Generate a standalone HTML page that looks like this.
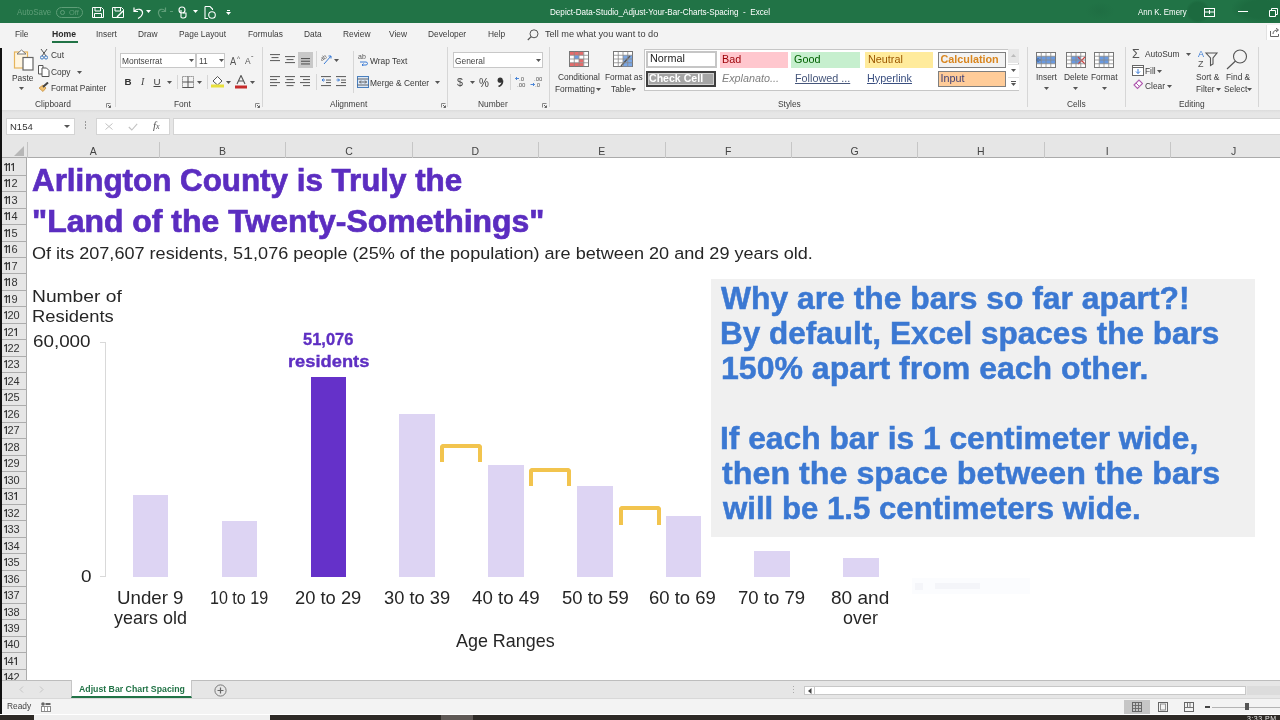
<!DOCTYPE html>
<html><head><meta charset="utf-8">
<style>
*{box-sizing:border-box;margin:0;padding:0}
html,body{width:1280px;height:720px;overflow:hidden;background:#fff;font-family:"Liberation Sans",sans-serif;}
.a{position:absolute;white-space:nowrap}
#titlebar{left:0;top:0;width:1280px;height:23px;background:#217346}
#tabs{left:0;top:23px;width:1280px;height:25px;background:#f3f3f3}
#ribbon{left:0;top:48px;width:1280px;height:62px;background:#f3f3f3}
#rshadow{left:0;top:110px;width:1280px;height:3px;background:linear-gradient(#dcdcdc,#e6e6e6)}
#fbar{left:0;top:113px;width:1280px;height:29px;background:#e6e6e6}
#colhdr{left:0;top:142px;width:1280px;height:16px;background:#e6e6e6;border-bottom:1px solid #ababab}
#rowhdr{left:0;top:158px;width:27px;height:522px;background:#e6e6e6;border-right:1px solid #ababab}
#tabbar{left:0;top:680px;width:1280px;height:19px;background:#e6e6e6;border-top:1px solid #bdbdbd;border-bottom:1px solid #d8d8d8}
#status{left:0;top:699px;width:1280px;height:15.4px;background:#f3f3f3}
#taskbar{left:0;top:714.6px;width:1280px;height:6px;background:#2e2a26}
#ledge{left:0;top:48px;width:2px;height:666px;background:#111}
.tx{color:#262626}
.t{line-height:1;transform-origin:0 0}
.co{font-size:31px;font-weight:bold;color:#3b78d2;-webkit-text-stroke:0.5px #3b78d2}
.bar{position:absolute;background:#ddd4f3}
.brk{position:absolute;border:4px solid #f2c44e;border-bottom:none;border-radius:4px 4px 0 0}
.ui{font-family:"Liberation Sans",sans-serif;white-space:nowrap}
.box{background:#fff;border:1px solid #d4d4d4}
.tri{width:0;height:0;border-left:3.5px solid transparent;border-right:3.5px solid transparent;border-top:3.5px solid #555}
.rl{position:absolute;left:2px;width:25px;height:1px;background:#adadad}
.rn{position:absolute;left:3.6px;font-size:11px;line-height:12px;color:#333;font-family:"Liberation Sans",sans-serif}
.o1{display:inline-block;vertical-align:baseline;margin-right:0.3px}
.cn{position:absolute;top:144.5px;width:40px;text-align:center;font-size:10.5px;line-height:12px;color:#444;font-family:"Liberation Sans",sans-serif}
.cs{position:absolute;top:142px;width:1px;height:16px;background:#c6c6c6}
#root{position:absolute;left:0;top:0;width:1280px;height:720px;will-change:transform}
</style></head><body><div id="root">
<div class="a" id="titlebar"></div>
<div class="a" id="tabs"></div>
<div class="a" id="ribbon"></div>
<div class="a" id="rshadow"></div>
<div class="a" id="fbar"></div>
<div class="a" id="colhdr"></div>
<div class="a" id="rowhdr"></div>
<div class="a" id="tabbar"></div>
<div class="a" id="status"></div>
<div class="a" id="taskbar"></div>
<div class="a" style="left:34px;top:714.6px;width:236px;height:6px;background:#efefef"></div>
<div class="a" style="left:440.6px;top:714.6px;width:32.5px;height:6px;background:#5e5855"></div>
<div class="a" id="ledge"></div>
<!--RIBBON-->
<div class="a" style="left:1186.00px;top:0.00px;width:24.00px;height:23.00px;background:radial-gradient(ellipse at center,#1c6a3f 0%,#1c6a3f 55%,rgba(33,115,70,0) 72%)"></div>
<div class="a" style="left:1232.00px;top:0.00px;width:50.00px;height:23.00px;background:radial-gradient(ellipse at 60% 40%,#1d6b40 0%,#1d6b40 45%,rgba(33,115,70,0) 75%)"></div>
<div class="a" style="left:1085.00px;top:2.00px;width:30.00px;height:18.00px;background:radial-gradient(ellipse at center,#1f6e43 0%,rgba(33,115,70,0) 70%)"></div>
<div class="a ui" style="left:16.50px;top:7.81px;font-size:9.20px;line-height:1;color:#5f9e78;transform:scaleX(0.860);transform-origin:0 0;">AutoSave</div>
<div class="a" style="left:56.00px;top:6.50px;width:27.00px;height:11.00px;border:1px solid #5f9e78;border-radius:6px"></div>
<div class="a" style="left:60.00px;top:9.50px;width:5.00px;height:5.00px;border:1px solid #5f9e78;border-radius:50%"></div>
<div class="a ui" style="left:68.50px;top:8.73px;font-size:8.00px;line-height:1;color:#5f9e78;transform:scaleX(0.930);transform-origin:0 0;">Off</div>
<svg class="a" style="left:92.00px;top:7.00px" width="12.00" height="11.00" viewBox="0 0 12.00 11.00"><path d="M0.5 0.5 H9.5 L11.5 2.5 V10.5 H0.5 Z M3 0.5 V4 H8.5 V0.5 M2.5 10.5 V6.5 H9.5 V10.5" stroke="#fff" fill="none" stroke-width="1"/></svg>
<svg class="a" style="left:112.00px;top:7.00px" width="12.00" height="11.00" viewBox="0 0 12.00 11.00"><path d="M0.5 0.5 H9.5 L11.5 2.5 V10.5 H0.5 Z M3 0.5 V4 H8.5 V0.5" stroke="#fff" fill="none" stroke-width="1"/><path d="M5 10 L11 4" stroke="#fff" stroke-width="1.5"/></svg>
<svg class="a" style="left:132.00px;top:6.00px" width="12.00" height="13.00" viewBox="0 0 12.00 13.00"><path d="M2 1.5 V5.5 H6 M2.5 5 C5 2 11 3 10.5 7.5 C10 10 8 11.5 6 12.5" stroke="#fff" fill="none" stroke-width="1.2"/></svg>
<svg class="a" style="left:145.50px;top:10.00px" width="5.00" height="3.00" viewBox="0 0 5.00 3.00"><path d="M0 0 H5 L2.5 3 Z" fill="#fff"/></svg>
<svg class="a" style="left:157.00px;top:6.00px" width="10.00" height="12.00" viewBox="0 0 10.00 12.00"><path d="M8.5 1.5 V5.5 H4.5 M8 5 C6 2 1 3 1.5 7.5 C2 10 3 11 4.5 12" stroke="#5f9e78" fill="none" stroke-width="1.2"/></svg>
<div class="a" style="left:170.00px;top:10.50px;width:3.00px;height:1.00px;background:#5f9e78"></div>
<svg class="a" style="left:178.00px;top:6.00px" width="9.00" height="13.00" viewBox="0 0 9.00 13.00"><circle cx="4" cy="4" r="3" stroke="#fff" fill="none" stroke-width="1.1"/><path d="M3 4 V11 C3 12.5 8 12.5 8 10 V7 H5" stroke="#fff" fill="none" stroke-width="1.1"/></svg>
<svg class="a" style="left:192.50px;top:10.00px" width="5.00" height="3.00" viewBox="0 0 5.00 3.00"><path d="M0 0 H5 L2.5 3 Z" fill="#fff"/></svg>
<svg class="a" style="left:204.00px;top:6.00px" width="12.00" height="13.00" viewBox="0 0 12.00 13.00"><path d="M1 0.5 H6 L8.5 3 V4 M1 0.5 V12.5 H4" stroke="#fff" fill="none" stroke-width="1.1"/><circle cx="8" cy="9" r="3.3" stroke="#fff" fill="none" stroke-width="1.1"/></svg>
<div class="a" style="left:226.50px;top:9.50px;width:3.00px;height:1.00px;background:#fff"></div>
<svg class="a" style="left:225.50px;top:11.50px" width="5.00" height="3.00" viewBox="0 0 5.00 3.00"><path d="M0 0 H5 L2.5 3 Z" fill="#fff"/></svg>
<div class="a ui" style="left:549.80px;top:7.14px;font-size:9.40px;line-height:1;color:#ffffff;transform:scaleX(0.865);transform-origin:0 0;">Depict-Data-Studio_Adjust-Your-Bar-Charts-Spacing&nbsp; - &nbsp;Excel</div>
<div class="a ui" style="left:1137.50px;top:7.14px;font-size:9.40px;line-height:1;color:#ffffff;transform:scaleX(0.840);transform-origin:0 0;">Ann K. Emery</div>
<svg class="a" style="left:1204.00px;top:7.50px" width="11.00" height="9.00" viewBox="0 0 11.00 9.00"><rect x="0.5" y="0.5" width="10" height="8" stroke="#fff" fill="none" stroke-width="1"/><path d="M0.5 4 H10.5 M5.5 2 V6" stroke="#fff" stroke-width="1"/></svg>
<div class="a" style="left:1238.00px;top:11.00px;width:10.00px;height:1.00px;background:#fff"></div>
<svg class="a" style="left:1269.00px;top:7.50px" width="9.00" height="9.00" viewBox="0 0 9.00 9.00"><path d="M0.5 2.5 H6.5 V8.5 H0.5 Z M2.5 2.5 V0.5 H8.5 V6.5 H6.5" stroke="#fff" fill="none" stroke-width="1"/></svg>
<div class="a ui" style="left:14.50px;top:30.21px;font-size:9.20px;line-height:1;color:#3a3a3a;transform:scaleX(0.910);transform-origin:0 0;">File</div>
<div class="a ui" style="left:96.00px;top:30.21px;font-size:9.20px;line-height:1;color:#3a3a3a;transform:scaleX(0.910);transform-origin:0 0;">Insert</div>
<div class="a ui" style="left:138.00px;top:30.21px;font-size:9.20px;line-height:1;color:#3a3a3a;transform:scaleX(0.910);transform-origin:0 0;">Draw</div>
<div class="a ui" style="left:179.25px;top:30.21px;font-size:9.20px;line-height:1;color:#3a3a3a;transform:scaleX(0.910);transform-origin:0 0;">Page Layout</div>
<div class="a ui" style="left:248.25px;top:30.21px;font-size:9.20px;line-height:1;color:#3a3a3a;transform:scaleX(0.910);transform-origin:0 0;">Formulas</div>
<div class="a ui" style="left:304.30px;top:30.21px;font-size:9.20px;line-height:1;color:#3a3a3a;transform:scaleX(0.910);transform-origin:0 0;">Data</div>
<div class="a ui" style="left:342.90px;top:30.21px;font-size:9.20px;line-height:1;color:#3a3a3a;transform:scaleX(0.910);transform-origin:0 0;">Review</div>
<div class="a ui" style="left:389.00px;top:30.21px;font-size:9.20px;line-height:1;color:#3a3a3a;transform:scaleX(0.910);transform-origin:0 0;">View</div>
<div class="a ui" style="left:427.50px;top:30.21px;font-size:9.20px;line-height:1;color:#3a3a3a;transform:scaleX(0.910);transform-origin:0 0;">Developer</div>
<div class="a ui" style="left:487.50px;top:30.21px;font-size:9.20px;line-height:1;color:#3a3a3a;transform:scaleX(0.910);transform-origin:0 0;">Help</div>
<div class="a ui" style="left:51.50px;top:30.21px;font-size:9.20px;line-height:1;color:#2a2a2a;transform:scaleX(0.940);transform-origin:0 0;font-weight:bold">Home</div>
<div class="a" style="left:52.00px;top:40.50px;width:26.00px;height:2.00px;background:#217346"></div>
<svg class="a" style="left:527.00px;top:29.00px" width="12.00" height="12.00" viewBox="0 0 12.00 12.00"><circle cx="7" cy="4.8" r="4" stroke="#555" fill="none" stroke-width="1"/><path d="M4.2 7.6 L0.8 11" stroke="#555" stroke-width="1.2"/></svg>
<div class="a ui" style="left:544.90px;top:30.21px;font-size:9.20px;line-height:1;color:#3a3a3a;">Tell me what you want to do</div>
<div class="a" style="left:1266.00px;top:25.00px;width:16.00px;height:15.00px;background:#fff;border-left:1px solid #e2e2e2"></div>
<svg class="a" style="left:1270.00px;top:28.00px" width="10.00" height="9.00" viewBox="0 0 10.00 9.00"><path d="M0.5 3 V8.5 H8.5 V6 M3 6 C3 3 5 2 8 2 M6 0 L8.5 2 L6 4" stroke="#666" fill="none" stroke-width="1"/></svg>
<svg class="a" style="left:13.00px;top:49.00px" width="21.00" height="22.00" viewBox="0 0 21.00 22.00"><rect x="1.5" y="3" width="13" height="16" fill="#fff5e0" stroke="#e6b45a" stroke-width="1.2"/><path d="M4 5 L8.5 1 L13 5 Z" fill="#fff" stroke="#777" stroke-width="1"/><rect x="10" y="8.5" width="10" height="12.5" fill="#fff" stroke="#666" stroke-width="1.2"/></svg>
<div class="a ui" style="left:11.50px;top:73.78px;font-size:9.00px;line-height:1;color:#383838;transform:scaleX(0.930);transform-origin:0 0;">Paste</div>
<svg class="a" style="left:19.00px;top:87.00px" width="5.00" height="3.00" viewBox="0 0 5.00 3.00"><path d="M0 0 H5 L2.5 3 Z" fill="#555"/></svg>
<svg class="a" style="left:40.00px;top:49.00px" width="8.00" height="11.00" viewBox="0 0 8.00 11.00"><path d="M1 0 L6 7 M7 0 L2 7" stroke="#555" stroke-width="1"/><circle cx="2" cy="8.5" r="1.6" stroke="#3c78c0" fill="none"/><circle cx="6" cy="8.5" r="1.6" stroke="#3c78c0" fill="none"/></svg>
<div class="a ui" style="left:50.50px;top:51.08px;font-size:9.00px;line-height:1;color:#383838;transform:scaleX(0.930);transform-origin:0 0;">Cut</div>
<svg class="a" style="left:37.50px;top:64.50px" width="12.00" height="12.00" viewBox="0 0 12.00 12.00"><path d="M0.5 0.5 H5 V9 H0.5 Z" stroke="#555" fill="#fff" stroke-width="1"/><path d="M4 3 H8.5 L11 5.5 V11.5 H4 Z" stroke="#555" fill="#fff" stroke-width="1"/></svg>
<div class="a ui" style="left:50.50px;top:67.58px;font-size:9.00px;line-height:1;color:#383838;transform:scaleX(0.930);transform-origin:0 0;">Copy</div>
<svg class="a" style="left:77.00px;top:70.50px" width="5.00" height="3.00" viewBox="0 0 5.00 3.00"><path d="M0 0 H5 L2.5 3 Z" fill="#555"/></svg>
<svg class="a" style="left:38.00px;top:82.00px" width="11.00" height="10.00" viewBox="0 0 11.00 10.00"><path d="M1 6 L5 3 L8 6 L5 9.5 Z" fill="#f0c070" stroke="#c89040" stroke-width="0.8"/><path d="M5 5 L10 0.5" stroke="#444" stroke-width="2"/></svg>
<div class="a ui" style="left:50.50px;top:83.68px;font-size:9.00px;line-height:1;color:#383838;transform:scaleX(0.930);transform-origin:0 0;">Format Painter</div>
<div class="a ui" style="left:34.50px;top:100.38px;font-size:9.00px;line-height:1;color:#3c3c3c;transform:scaleX(0.930);transform-origin:0 0;">Clipboard</div>
<svg class="a" style="left:106.00px;top:102.50px" width="5.00" height="5.00" viewBox="0 0 5.00 5.00"><path d="M0.5 4.5 V0.5 H4.5" stroke="#888" fill="none" stroke-width="1"/><path d="M2 2 L4.5 4.5 M4.5 2.5 V4.5 H2.5" stroke="#666" fill="none" stroke-width="1"/></svg>
<div class="a" style="left:114.50px;top:46.50px;width:1.00px;height:60.00px;background:#d6d6d6"></div>
<div class="a" style="left:120.25px;top:52.50px;width:76.00px;height:15.00px;background:#fff;border:1px solid #c8c8c8"></div>
<div class="a" style="left:196.00px;top:52.50px;width:29.40px;height:15.00px;background:#fff;border:1px solid #c8c8c8"></div>
<div class="a ui" style="left:122.00px;top:56.68px;font-size:9.00px;line-height:1;color:#444;transform:scaleX(0.930);transform-origin:0 0;">Montserrat</div>
<svg class="a" style="left:188.50px;top:59.00px" width="5.00" height="3.00" viewBox="0 0 5.00 3.00"><path d="M0 0 H5 L2.5 3 Z" fill="#555"/></svg>
<div class="a ui" style="left:198.50px;top:56.68px;font-size:9.00px;line-height:1;color:#444;transform:scaleX(0.930);transform-origin:0 0;">11</div>
<svg class="a" style="left:218.50px;top:59.00px" width="5.00" height="3.00" viewBox="0 0 5.00 3.00"><path d="M0 0 H5 L2.5 3 Z" fill="#555"/></svg>
<div class="a ui" style="left:229.50px;top:56.53px;font-size:10.00px;line-height:1;color:#555;transform:scaleX(0.930);transform-origin:0 0;">A</div>
<div class="a ui" style="left:236.50px;top:55.07px;font-size:7.00px;line-height:1;color:#555;transform:scaleX(0.930);transform-origin:0 0;">^</div>
<div class="a ui" style="left:244.50px;top:57.38px;font-size:9.00px;line-height:1;color:#555;transform:scaleX(0.930);transform-origin:0 0;">A</div>
<div class="a ui" style="left:251.00px;top:55.23px;font-size:8.00px;line-height:1;color:#555;transform:scaleX(0.930);transform-origin:0 0;">&#711;</div>
<div class="a ui" style="left:124.50px;top:77.00px;font-size:9.80px;line-height:1;color:#333;font-weight:bold">B</div>
<div class="a ui" style="left:141.00px;top:76.83px;font-size:10.00px;line-height:1;color:#444;font-family:'Liberation Serif',serif;font-style:italic">I</div>
<div class="a ui" style="left:153.50px;top:77.00px;font-size:9.80px;line-height:1;color:#444;text-decoration:underline">U</div>
<svg class="a" style="left:166.50px;top:81.00px" width="5.00" height="3.00" viewBox="0 0 5.00 3.00"><path d="M0 0 H5 L2.5 3 Z" fill="#555"/></svg>
<div class="a" style="left:177.00px;top:75.00px;width:1.00px;height:14.00px;background:#d6d6d6"></div>
<svg class="a" style="left:182.00px;top:76.00px" width="12.00" height="12.00" viewBox="0 0 12.00 12.00"><rect x="0.5" y="0.5" width="11" height="11" stroke="#777" fill="none" stroke-width="1" stroke-dasharray="1.2 0.8"/><path d="M6 0.5 V11.5 M0.5 6 H11.5 M0.5 11.5 H11.5" stroke="#555" stroke-width="1"/></svg>
<svg class="a" style="left:196.50px;top:81.00px" width="5.00" height="3.00" viewBox="0 0 5.00 3.00"><path d="M0 0 H5 L2.5 3 Z" fill="#555"/></svg>
<div class="a" style="left:206.50px;top:75.00px;width:1.00px;height:14.00px;background:#d6d6d6"></div>
<svg class="a" style="left:211.00px;top:75.00px" width="13.00" height="13.00" viewBox="0 0 13.00 13.00"><path d="M2 6 L6.5 1.5 L11 6 L6.5 10 Z" stroke="#555" fill="#fff" stroke-width="1"/><rect x="0" y="9.5" width="13" height="3" fill="#e8e03c"/></svg>
<svg class="a" style="left:226.00px;top:81.00px" width="5.00" height="3.00" viewBox="0 0 5.00 3.00"><path d="M0 0 H5 L2.5 3 Z" fill="#555"/></svg>
<svg class="a" style="left:235.00px;top:75.00px" width="12.00" height="14.00" viewBox="0 0 12.00 14.00"><path d="M2 9 L6 0.5 L10 9 M3.5 6 H8.5" stroke="#555" fill="none" stroke-width="1.1"/><rect x="0" y="10.5" width="12" height="3" fill="#c62b2b"/></svg>
<svg class="a" style="left:249.50px;top:81.00px" width="5.00" height="3.00" viewBox="0 0 5.00 3.00"><path d="M0 0 H5 L2.5 3 Z" fill="#555"/></svg>
<div class="a ui" style="left:173.50px;top:100.38px;font-size:9.00px;line-height:1;color:#3c3c3c;transform:scaleX(0.930);transform-origin:0 0;">Font</div>
<svg class="a" style="left:255.00px;top:102.50px" width="5.00" height="5.00" viewBox="0 0 5.00 5.00"><path d="M0.5 4.5 V0.5 H4.5" stroke="#888" fill="none" stroke-width="1"/><path d="M2 2 L4.5 4.5 M4.5 2.5 V4.5 H2.5" stroke="#666" fill="none" stroke-width="1"/></svg>
<div class="a" style="left:261.80px;top:46.50px;width:1.00px;height:60.00px;background:#d6d6d6"></div>
<svg class="a" style="left:270.00px;top:54.00px" width="12.00" height="10.00" viewBox="0 0 12.00 10.00"><rect x="0.0" y="0.0" width="10.0" height="1.1" fill="#666"/><rect x="1.5" y="3.0" width="7.0" height="1.1" fill="#666"/><rect x="0.0" y="6.0" width="10.0" height="1.1" fill="#666"/></svg>
<svg class="a" style="left:285.00px;top:56.00px" width="12.00" height="10.00" viewBox="0 0 12.00 10.00"><rect x="0.0" y="0.0" width="10.0" height="1.1" fill="#666"/><rect x="1.5" y="3.0" width="7.0" height="1.1" fill="#666"/><rect x="0.0" y="6.0" width="10.0" height="1.1" fill="#666"/></svg>
<div class="a" style="left:297.60px;top:52.00px;width:15.00px;height:16.00px;background:#c8c8c8"></div>
<svg class="a" style="left:301.00px;top:58.00px" width="12.00" height="9.10" viewBox="0 0 12.00 9.10"><rect x="0.0" y="0.0" width="9.0" height="1.1" fill="#555"/><rect x="0.0" y="2.7" width="9.0" height="1.1" fill="#555"/><rect x="0.0" y="5.4" width="9.0" height="1.1" fill="#555"/></svg>
<div class="a" style="left:315.50px;top:51.00px;width:1.00px;height:16.00px;background:#d6d6d6"></div>
<svg class="a" style="left:321.00px;top:53.00px" width="12.00" height="12.00" viewBox="0 0 12.00 12.00"><text x="0" y="6" font-size="6" fill="#555" font-family="Liberation Sans" transform="rotate(-35 4 6)">ab</text><path d="M3 11 L10 3 M7.5 3 H10 V5.5" stroke="#3a7bd5" fill="none" stroke-width="1"/></svg>
<svg class="a" style="left:333.50px;top:59.00px" width="5.00" height="3.00" viewBox="0 0 5.00 3.00"><path d="M0 0 H5 L2.5 3 Z" fill="#555"/></svg>
<svg class="a" style="left:270.00px;top:76.00px" width="12.00" height="13.00" viewBox="0 0 12.00 13.00"><rect x="0.0" y="0.0" width="10.0" height="1.1" fill="#666"/><rect x="0.0" y="3.0" width="7.0" height="1.1" fill="#666"/><rect x="0.0" y="6.0" width="10.0" height="1.1" fill="#666"/><rect x="0.0" y="9.0" width="7.0" height="1.1" fill="#666"/></svg>
<svg class="a" style="left:285.00px;top:76.00px" width="12.00" height="13.00" viewBox="0 0 12.00 13.00"><rect x="0.0" y="0.0" width="10.0" height="1.1" fill="#666"/><rect x="1.5" y="3.0" width="7.0" height="1.1" fill="#666"/><rect x="0.0" y="6.0" width="10.0" height="1.1" fill="#666"/><rect x="1.5" y="9.0" width="7.0" height="1.1" fill="#666"/></svg>
<svg class="a" style="left:300.00px;top:76.00px" width="12.00" height="13.00" viewBox="0 0 12.00 13.00"><rect x="0.0" y="0.0" width="10.0" height="1.1" fill="#666"/><rect x="3.0" y="3.0" width="7.0" height="1.1" fill="#666"/><rect x="0.0" y="6.0" width="10.0" height="1.1" fill="#666"/><rect x="3.0" y="9.0" width="7.0" height="1.1" fill="#666"/></svg>
<div class="a" style="left:315.50px;top:74.00px;width:1.00px;height:16.00px;background:#d6d6d6"></div>
<svg class="a" style="left:321.00px;top:76.00px" width="11.00" height="11.00" viewBox="0 0 11.00 11.00"><rect x="0" y="0" width="10" height="1.1" fill="#666"/><rect x="5" y="3.5" width="5" height="1.1" fill="#666"/><rect x="0" y="9" width="10" height="1.1" fill="#666"/><path d="M4 4 L1 4 M2.5 2.5 L1 4 L2.5 5.5" stroke="#3a7bd5" fill="none" stroke-width="1"/><rect x="5" y="6" width="5" height="1.1" fill="#666"/></svg>
<svg class="a" style="left:336.00px;top:76.00px" width="11.00" height="11.00" viewBox="0 0 11.00 11.00"><rect x="0" y="0" width="10" height="1.1" fill="#666"/><rect x="5" y="3.5" width="5" height="1.1" fill="#666"/><rect x="0" y="9" width="10" height="1.1" fill="#666"/><path d="M0.5 4 L3.5 4 M2 2.5 L3.5 4 L2 5.5" stroke="#3a7bd5" fill="none" stroke-width="1"/><rect x="5" y="6" width="5" height="1.1" fill="#666"/></svg>
<div class="a" style="left:352.70px;top:51.00px;width:1.00px;height:42.00px;background:#d6d6d6"></div>
<svg class="a" style="left:358.00px;top:53.00px" width="11.00" height="13.00" viewBox="0 0 11.00 13.00"><text x="0" y="6" font-size="7" fill="#555" font-family="Liberation Sans">ab</text><path d="M2 9 H8 C10 9 10 12 8 12 H4 M5.5 10.5 L4 12 L5.5 13" stroke="#3a7bd5" fill="none" stroke-width="1"/></svg>
<div class="a ui" style="left:370.00px;top:56.88px;font-size:9.00px;line-height:1;color:#383838;transform:scaleX(0.930);transform-origin:0 0;">Wrap Text</div>
<svg class="a" style="left:357.00px;top:75.50px" width="12.00" height="12.00" viewBox="0 0 12.00 12.00"><rect x="0.5" y="0.5" width="11" height="11" stroke="#4a7fbd" fill="#dbe8f7" stroke-width="1"/><path d="M2.5 6 H9.5 M4 4.5 L2.5 6 L4 7.5 M8 4.5 L9.5 6 L8 7.5 M0.5 3 H11.5 M0.5 9 H11.5" stroke="#555" fill="none" stroke-width="0.9"/></svg>
<div class="a ui" style="left:370.10px;top:78.88px;font-size:9.00px;line-height:1;color:#383838;transform:scaleX(0.930);transform-origin:0 0;">Merge &amp; Center</div>
<svg class="a" style="left:434.50px;top:81.00px" width="5.00" height="3.00" viewBox="0 0 5.00 3.00"><path d="M0 0 H5 L2.5 3 Z" fill="#555"/></svg>
<div class="a ui" style="left:330.00px;top:100.38px;font-size:9.00px;line-height:1;color:#3c3c3c;transform:scaleX(0.930);transform-origin:0 0;">Alignment</div>
<svg class="a" style="left:440.50px;top:102.50px" width="5.00" height="5.00" viewBox="0 0 5.00 5.00"><path d="M0.5 4.5 V0.5 H4.5" stroke="#888" fill="none" stroke-width="1"/><path d="M2 2 L4.5 4.5 M4.5 2.5 V4.5 H2.5" stroke="#666" fill="none" stroke-width="1"/></svg>
<div class="a" style="left:447.20px;top:46.50px;width:1.00px;height:60.00px;background:#d6d6d6"></div>
<div class="a" style="left:453.30px;top:52.10px;width:89.70px;height:15.60px;background:#fff;border:1px solid #c8c8c8"></div>
<div class="a ui" style="left:455.10px;top:56.68px;font-size:9.00px;line-height:1;color:#444;transform:scaleX(0.930);transform-origin:0 0;">General</div>
<svg class="a" style="left:535.50px;top:59.00px" width="5.00" height="3.00" viewBox="0 0 5.00 3.00"><path d="M0 0 H5 L2.5 3 Z" fill="#555"/></svg>
<div class="a ui" style="left:456.50px;top:77.27px;font-size:11.50px;line-height:1;color:#444;transform:scaleX(0.930);transform-origin:0 0;">$</div>
<svg class="a" style="left:469.50px;top:81.00px" width="5.00" height="3.00" viewBox="0 0 5.00 3.00"><path d="M0 0 H5 L2.5 3 Z" fill="#555"/></svg>
<div class="a ui" style="left:478.50px;top:76.84px;font-size:12.00px;line-height:1;color:#444;transform:scaleX(0.930);transform-origin:0 0;">%</div>
<svg class="a" style="left:496.50px;top:77.00px" width="7.00" height="10.00" viewBox="0 0 7.00 10.00"><circle cx="3.2" cy="3.2" r="2.6" fill="#333"/><path d="M5.6 3.5 C5.6 6.5 4 8.5 1.5 9.5" stroke="#333" stroke-width="1.6" fill="none"/></svg>
<div class="a" style="left:510.00px;top:74.00px;width:1.00px;height:16.00px;background:#d6d6d6"></div>
<svg class="a" style="left:515.00px;top:75.00px" width="12.00" height="12.00" viewBox="0 0 12.00 12.00"><text x="4" y="5.5" font-size="6" fill="#555" font-family="Liberation Sans">.0</text><text x="2" y="11.5" font-size="6" fill="#555" font-family="Liberation Sans">.00</text><path d="M0.5 3.5 H4 M2 2 L0.5 3.5 L2 5" stroke="#3a7bd5" fill="none" stroke-width="0.9"/></svg>
<svg class="a" style="left:530.00px;top:75.00px" width="12.00" height="12.00" viewBox="0 0 12.00 12.00"><text x="4" y="5.5" font-size="6" fill="#555" font-family="Liberation Sans">.00</text><text x="5" y="11.5" font-size="6" fill="#555" font-family="Liberation Sans">.0</text><path d="M0.5 9.5 H4.5 M3 8 L4.5 9.5 L3 11" stroke="#3a7bd5" fill="none" stroke-width="0.9"/></svg>
<div class="a ui" style="left:477.50px;top:100.38px;font-size:9.00px;line-height:1;color:#3c3c3c;transform:scaleX(0.930);transform-origin:0 0;">Number</div>
<svg class="a" style="left:541.50px;top:102.50px" width="5.00" height="5.00" viewBox="0 0 5.00 5.00"><path d="M0.5 4.5 V0.5 H4.5" stroke="#888" fill="none" stroke-width="1"/><path d="M2 2 L4.5 4.5 M4.5 2.5 V4.5 H2.5" stroke="#666" fill="none" stroke-width="1"/></svg>
<div class="a" style="left:548.60px;top:46.50px;width:1.00px;height:60.00px;background:#d6d6d6"></div>
<svg class="a" style="left:569.00px;top:51.00px" width="20.00" height="16.00" viewBox="0 0 20.00 16.00"><rect x="0.5" y="0.5" width="19" height="15" fill="#fff" stroke="#777" stroke-width="1"/><rect x="1" y="1" width="13.5" height="3.2" fill="#e46c6c"/><rect x="5.3" y="4.3" width="4.6" height="3.6" fill="#6a9ae0"/><rect x="10" y="8" width="4.6" height="3.6" fill="#e46c6c"/><rect x="1" y="11.8" width="13.5" height="3.2" fill="#e46c6c"/><path d="M5.25 0.5 V15.5" stroke="#888" stroke-width="0.8"/><path d="M10.00 0.5 V15.5" stroke="#888" stroke-width="0.8"/><path d="M14.75 0.5 V15.5" stroke="#888" stroke-width="0.8"/><path d="M0.5 4.25 H19.5" stroke="#888" stroke-width="0.8"/><path d="M0.5 8.00 H19.5" stroke="#888" stroke-width="0.8"/><path d="M0.5 11.75 H19.5" stroke="#888" stroke-width="0.8"/></svg>
<div class="a ui" style="left:557.50px;top:73.38px;font-size:9.00px;line-height:1;color:#383838;transform:scaleX(0.930);transform-origin:0 0;">Conditional</div>
<div class="a ui" style="left:555.00px;top:84.68px;font-size:9.00px;line-height:1;color:#383838;transform:scaleX(0.930);transform-origin:0 0;">Formatting</div>
<svg class="a" style="left:596.00px;top:88.00px" width="5.00" height="3.00" viewBox="0 0 5.00 3.00"><path d="M0 0 H5 L2.5 3 Z" fill="#555"/></svg>
<svg class="a" style="left:613.00px;top:51.00px" width="20.00" height="16.00" viewBox="0 0 20.00 16.00"><rect x="0.5" y="0.5" width="19" height="15" fill="#fff" stroke="#777" stroke-width="1"/><rect x="10" y="4.3" width="9" height="11" fill="#7aa7e6"/><path d="M8 15 L17 5" stroke="#555" stroke-width="1.5"/><path d="M5.25 0.5 V15.5" stroke="#888" stroke-width="0.8"/><path d="M10.00 0.5 V15.5" stroke="#888" stroke-width="0.8"/><path d="M14.75 0.5 V15.5" stroke="#888" stroke-width="0.8"/><path d="M0.5 4.25 H19.5" stroke="#888" stroke-width="0.8"/><path d="M0.5 8.00 H19.5" stroke="#888" stroke-width="0.8"/><path d="M0.5 11.75 H19.5" stroke="#888" stroke-width="0.8"/></svg>
<div class="a ui" style="left:604.50px;top:73.38px;font-size:9.00px;line-height:1;color:#383838;transform:scaleX(0.930);transform-origin:0 0;">Format as</div>
<div class="a ui" style="left:610.50px;top:84.68px;font-size:9.00px;line-height:1;color:#383838;transform:scaleX(0.930);transform-origin:0 0;">Table</div>
<svg class="a" style="left:630.50px;top:88.00px" width="5.00" height="3.00" viewBox="0 0 5.00 3.00"><path d="M0 0 H5 L2.5 3 Z" fill="#555"/></svg>
<div class="a" style="left:643.75px;top:48.70px;width:375.00px;height:42.00px;background:#fff;border:1px solid #c6c6c6"></div>
<div class="a" style="left:645.50px;top:51.00px;width:71.00px;height:17.20px;background:#fff;border:2px solid #c6c6c6"></div>
<div class="a ui" style="left:650.00px;top:53.47px;font-size:10.8px;line-height:1;color:#222">Normal</div>
<div class="a" style="left:719.50px;top:51.50px;width:68.00px;height:16.50px;background:#ffc7ce"></div>
<div class="a ui" style="left:722.00px;top:53.62px;font-size:10.8px;line-height:1;color:#9c0006">Bad</div>
<div class="a" style="left:791.00px;top:51.50px;width:69.00px;height:16.50px;background:#c6efce"></div>
<div class="a ui" style="left:794.00px;top:53.62px;font-size:10.8px;line-height:1;color:#006100">Good</div>
<div class="a" style="left:865.00px;top:51.50px;width:68.00px;height:16.50px;background:#ffeb9c"></div>
<div class="a ui" style="left:868.00px;top:53.62px;font-size:10.8px;line-height:1;color:#9c5700">Neutral</div>
<div class="a" style="left:937.50px;top:51.50px;width:68.20px;height:16.50px;background:#f2f2f2;border:1px solid #7f7f7f"></div>
<div class="a ui" style="left:940.50px;top:53.62px;font-size:10.8px;line-height:1;color:#d9861f;font-weight:bold">Calculation</div>
<div class="a" style="left:645.50px;top:71.00px;width:70.00px;height:15.50px;background:#a5a5a5;border:2px solid #3f3f3f;box-shadow:inset 0 0 0 1px #d0d0d0"></div>
<div class="a ui" style="left:649.00px;top:72.62px;font-size:10.8px;line-height:1;color:#fff;font-weight:bold;transform:scaleX(0.98);transform-origin:0 0">Check Cell</div>
<div class="a" style="left:719.50px;top:71.00px;width:68.00px;height:15.50px;"></div>
<div class="a ui" style="left:722.00px;top:72.62px;font-size:10.8px;line-height:1;color:#7f7f7f;font-style:italic">Explanato...</div>
<div class="a" style="left:791.00px;top:71.00px;width:69.00px;height:15.50px;"></div>
<div class="a ui" style="left:795.00px;top:72.62px;font-size:10.8px;line-height:1;color:#45557a;text-decoration:underline">Followed ...</div>
<div class="a" style="left:865.00px;top:71.00px;width:68.00px;height:15.50px;"></div>
<div class="a ui" style="left:867.00px;top:72.62px;font-size:10.8px;line-height:1;color:#3a4f80;text-decoration:underline">Hyperlink</div>
<div class="a" style="left:937.50px;top:71.00px;width:68.20px;height:15.50px;background:#ffcc99;border:1px solid #7f7f7f"></div>
<div class="a ui" style="left:940.50px;top:72.62px;font-size:10.8px;line-height:1;color:#3f3f76">Input</div>
<div class="a" style="left:1008.00px;top:49.20px;width:10.50px;height:14.00px;background:#e6e6e6"></div>
<svg class="a" style="left:1011.00px;top:54.00px" width="5.00" height="3.00" viewBox="0 0 5.00 3.00"><path d="M0 3 H5 L2.5 0 Z" fill="#bbb"/></svg>
<div class="a" style="left:1008.00px;top:63.50px;width:10.50px;height:13.00px;background:#fff;border-top:1px solid #e0e0e0"></div>
<svg class="a" style="left:1010.70px;top:69.00px" width="5.00" height="3.00" viewBox="0 0 5.00 3.00"><path d="M0 0 H5 L2.5 3 Z" fill="#555"/></svg>
<div class="a" style="left:1008.00px;top:76.50px;width:10.50px;height:13.50px;background:#fff;border-top:1px solid #e0e0e0"></div>
<div class="a" style="left:1010.70px;top:81.00px;width:5.00px;height:1.00px;background:#555"></div>
<svg class="a" style="left:1010.70px;top:83.00px" width="5.00" height="3.00" viewBox="0 0 5.00 3.00"><path d="M0 0 H5 L2.5 3 Z" fill="#555"/></svg>
<div class="a ui" style="left:777.50px;top:100.38px;font-size:9.00px;line-height:1;color:#3c3c3c;transform:scaleX(0.930);transform-origin:0 0;">Styles</div>
<div class="a" style="left:1026.70px;top:46.50px;width:1.00px;height:60.00px;background:#d6d6d6"></div>
<svg class="a" style="left:1036.00px;top:51.50px" width="20.00" height="16.00" viewBox="0 0 20.00 16.00"><rect x="0.5" y="0.5" width="19" height="15" fill="#fff" stroke="#777" stroke-width="1"/><rect x="1" y="4.3" width="18" height="7.4" fill="#6a9ae0"/><path d="M5 8 H0.5 M2.5 6 L0.5 8 L2.5 10" stroke="#2a5aa0" fill="none" stroke-width="1"/><path d="M5.25 0.5 V15.5" stroke="#888" stroke-width="0.8"/><path d="M10.00 0.5 V15.5" stroke="#888" stroke-width="0.8"/><path d="M14.75 0.5 V15.5" stroke="#888" stroke-width="0.8"/><path d="M0.5 4.25 H19.5" stroke="#888" stroke-width="0.8"/><path d="M0.5 8.00 H19.5" stroke="#888" stroke-width="0.8"/><path d="M0.5 11.75 H19.5" stroke="#888" stroke-width="0.8"/></svg>
<div class="a ui" style="left:1035.50px;top:73.38px;font-size:9.00px;line-height:1;color:#383838;transform:scaleX(0.930);transform-origin:0 0;">Insert</div>
<svg class="a" style="left:1043.50px;top:87.00px" width="5.00" height="3.00" viewBox="0 0 5.00 3.00"><path d="M0 0 H5 L2.5 3 Z" fill="#555"/></svg>
<svg class="a" style="left:1065.50px;top:51.50px" width="20.00" height="16.00" viewBox="0 0 20.00 16.00"><rect x="0.5" y="0.5" width="19" height="15" fill="#fff" stroke="#777" stroke-width="1"/><rect x="5.3" y="4.3" width="9.4" height="7.4" fill="#6a9ae0"/><path d="M12 5 L19 12 M19 5 L12 12" stroke="#d04040" stroke-width="1.2"/><path d="M5.25 0.5 V15.5" stroke="#888" stroke-width="0.8"/><path d="M10.00 0.5 V15.5" stroke="#888" stroke-width="0.8"/><path d="M14.75 0.5 V15.5" stroke="#888" stroke-width="0.8"/><path d="M0.5 4.25 H19.5" stroke="#888" stroke-width="0.8"/><path d="M0.5 8.00 H19.5" stroke="#888" stroke-width="0.8"/><path d="M0.5 11.75 H19.5" stroke="#888" stroke-width="0.8"/></svg>
<div class="a ui" style="left:1063.50px;top:73.38px;font-size:9.00px;line-height:1;color:#383838;transform:scaleX(0.930);transform-origin:0 0;">Delete</div>
<svg class="a" style="left:1073.00px;top:87.00px" width="5.00" height="3.00" viewBox="0 0 5.00 3.00"><path d="M0 0 H5 L2.5 3 Z" fill="#555"/></svg>
<svg class="a" style="left:1094.00px;top:51.50px" width="20.00" height="16.00" viewBox="0 0 20.00 16.00"><rect x="0.5" y="0.5" width="19" height="15" fill="#fff" stroke="#777" stroke-width="1"/><rect x="5.3" y="4.3" width="9.4" height="7.4" fill="#6a9ae0"/><path d="M5 -0.5 H15" stroke="#2a5aa0" stroke-width="1"/><path d="M5.25 0.5 V15.5" stroke="#888" stroke-width="0.8"/><path d="M10.00 0.5 V15.5" stroke="#888" stroke-width="0.8"/><path d="M14.75 0.5 V15.5" stroke="#888" stroke-width="0.8"/><path d="M0.5 4.25 H19.5" stroke="#888" stroke-width="0.8"/><path d="M0.5 8.00 H19.5" stroke="#888" stroke-width="0.8"/><path d="M0.5 11.75 H19.5" stroke="#888" stroke-width="0.8"/></svg>
<div class="a ui" style="left:1091.00px;top:73.38px;font-size:9.00px;line-height:1;color:#383838;transform:scaleX(0.930);transform-origin:0 0;">Format</div>
<svg class="a" style="left:1101.50px;top:87.00px" width="5.00" height="3.00" viewBox="0 0 5.00 3.00"><path d="M0 0 H5 L2.5 3 Z" fill="#555"/></svg>
<div class="a ui" style="left:1066.50px;top:100.38px;font-size:9.00px;line-height:1;color:#3c3c3c;transform:scaleX(0.930);transform-origin:0 0;">Cells</div>
<div class="a" style="left:1124.60px;top:46.50px;width:1.00px;height:60.00px;background:#d6d6d6"></div>
<div class="a ui" style="left:1132.00px;top:48.42px;font-size:12.50px;line-height:1;color:#555;">&Sigma;</div>
<div class="a ui" style="left:1145.00px;top:49.88px;font-size:9.00px;line-height:1;color:#383838;transform:scaleX(0.930);transform-origin:0 0;">AutoSum</div>
<svg class="a" style="left:1185.50px;top:52.50px" width="5.00" height="3.00" viewBox="0 0 5.00 3.00"><path d="M0 0 H5 L2.5 3 Z" fill="#555"/></svg>
<svg class="a" style="left:1132.00px;top:64.50px" width="12.00" height="11.00" viewBox="0 0 12.00 11.00"><rect x="0.5" y="0.5" width="11" height="10" stroke="#666" fill="#fff" stroke-width="1"/><path d="M0.5 2.5 H11.5" stroke="#666"/><path d="M6 4 V8.5 M4 6.5 L6 8.5 L8 6.5" stroke="#3a7bd5" fill="none" stroke-width="1"/></svg>
<div class="a ui" style="left:1145.00px;top:66.58px;font-size:9.00px;line-height:1;color:#383838;transform:scaleX(0.930);transform-origin:0 0;">Fill</div>
<svg class="a" style="left:1156.50px;top:70.00px" width="5.00" height="3.00" viewBox="0 0 5.00 3.00"><path d="M0 0 H5 L2.5 3 Z" fill="#555"/></svg>
<svg class="a" style="left:1133.00px;top:79.00px" width="10.00" height="11.00" viewBox="0 0 10.00 11.00"><path d="M1 6 L6 1 L9.5 4.5 L4.5 9.5 Z" stroke="#b05ab0" fill="#fff" stroke-width="1.1"/><path d="M3 4 L6.5 7.5" stroke="#b05ab0" stroke-width="1"/></svg>
<div class="a ui" style="left:1145.00px;top:81.58px;font-size:9.00px;line-height:1;color:#383838;transform:scaleX(0.930);transform-origin:0 0;">Clear</div>
<svg class="a" style="left:1166.50px;top:84.50px" width="5.00" height="3.00" viewBox="0 0 5.00 3.00"><path d="M0 0 H5 L2.5 3 Z" fill="#555"/></svg>
<svg class="a" style="left:1197.00px;top:49.00px" width="22.00" height="19.00" viewBox="0 0 22.00 19.00"><text x="1" y="8" font-size="9" fill="#3a7bd5" font-family="Liberation Sans">A</text><text x="1" y="18" font-size="9" fill="#555" font-family="Liberation Sans">Z</text><path d="M9 4 H20 L16 9 V15 L13.5 16.5 V9 Z" stroke="#555" fill="none" stroke-width="1.1"/></svg>
<div class="a ui" style="left:1195.50px;top:73.38px;font-size:9.00px;line-height:1;color:#383838;transform:scaleX(0.930);transform-origin:0 0;">Sort &amp;</div>
<div class="a ui" style="left:1195.50px;top:84.68px;font-size:9.00px;line-height:1;color:#383838;transform:scaleX(0.930);transform-origin:0 0;">Filter</div>
<svg class="a" style="left:1216.00px;top:88.00px" width="5.00" height="3.00" viewBox="0 0 5.00 3.00"><path d="M0 0 H5 L2.5 3 Z" fill="#555"/></svg>
<svg class="a" style="left:1226.00px;top:49.00px" width="22.00" height="21.00" viewBox="0 0 22.00 21.00"><circle cx="14" cy="7.5" r="6.5" stroke="#555" fill="none" stroke-width="1.1"/><path d="M9.5 12 L1 20" stroke="#555" stroke-width="1.1"/></svg>
<div class="a ui" style="left:1225.50px;top:73.38px;font-size:9.00px;line-height:1;color:#383838;transform:scaleX(0.930);transform-origin:0 0;">Find &amp;</div>
<div class="a ui" style="left:1223.50px;top:84.68px;font-size:9.00px;line-height:1;color:#383838;transform:scaleX(0.930);transform-origin:0 0;">Select</div>
<svg class="a" style="left:1246.50px;top:88.00px" width="5.00" height="3.00" viewBox="0 0 5.00 3.00"><path d="M0 0 H5 L2.5 3 Z" fill="#555"/></svg>
<div class="a ui" style="left:1178.50px;top:100.38px;font-size:9.00px;line-height:1;color:#3c3c3c;transform:scaleX(0.930);transform-origin:0 0;">Editing</div>
<div class="a" style="left:1257.70px;top:46.50px;width:1.00px;height:60.00px;background:#d6d6d6"></div>
<!--/RIBBON-->
<!-- formula bar -->
<div class="a box" style="left:5.5px;top:117.5px;width:69px;height:17.5px"></div>
<div class="a ui" style="left:10px;top:121px;font-size:9.5px;color:#333">N154</div>
<div class="a tri" style="left:64px;top:124.5px"></div>
<div class="a" style="left:84.5px;top:121px;width:1px;height:1.5px;background:#999;box-shadow:0 3px 0 #999,0 6px 0 #999"></div>
<div class="a box" style="left:95.6px;top:117.5px;width:74.6px;height:17.5px"></div>
<div class="a box" style="left:173px;top:117.5px;width:1110px;height:17.5px"></div>
<svg class="a" style="left:104.5px;top:123px" width="8" height="7"><path d="M0.5 0.5 L7.5 6.5 M7.5 0.5 L0.5 6.5" stroke="#c2c2c2" stroke-width="1" fill="none"/></svg>
<svg class="a" style="left:128px;top:122.5px" width="10" height="8"><path d="M0.8 4 L3.8 7 L9.2 0.8" stroke="#c2c2c2" stroke-width="1.1" fill="none"/></svg>
<div class="a" style="left:153px;top:118.5px;font-family:'Liberation Serif',serif;font-style:italic;font-size:11px;color:#555">f<span style="font-size:8px">x</span></div>
<!-- column headers -->
<div class="a" style="left:14px;top:146px;width:0;height:0;border-left:10px solid transparent;border-bottom:10px solid #b7b7b7"></div>
<div class="a" style="left:26.5px;top:142px;width:1px;height:16px;background:#c4c4c4"></div>
<div class="cn" style="left:73.2px">A</div>
<div class="cn" style="left:202.6px">B</div>
<div class="cn" style="left:329.0px">C</div>
<div class="cn" style="left:455.4px">D</div>
<div class="cn" style="left:581.8px">E</div>
<div class="cn" style="left:708.2px">F</div>
<div class="cn" style="left:834.5px">G</div>
<div class="cn" style="left:960.9px">H</div>
<div class="cn" style="left:1087.3px">I</div>
<div class="cn" style="left:1213.7px">J</div>
<div class="cs" style="left:158.9px"></div>
<div class="cs" style="left:285.3px"></div>
<div class="cs" style="left:411.7px"></div>
<div class="cs" style="left:538.1px"></div>
<div class="cs" style="left:664.5px"></div>
<div class="cs" style="left:790.9px"></div>
<div class="cs" style="left:917.2px"></div>
<div class="cs" style="left:1043.6px"></div>
<div class="cs" style="left:1170.0px"></div>
<!-- row headers -->
<div class="a" style="left:0;top:158px;width:28px;height:522px;overflow:hidden">
<div class="rl" style="top:16.62px"></div><div class="rn" style="top:2.85px"><svg class="o1" width="3.6" height="8" viewBox="0 0 3.6 8"><path d="M0.2 2.1 L2.4 0.6 V8" stroke="#333" stroke-width="1.15" fill="none"/></svg><svg class="o1" width="3.6" height="8" viewBox="0 0 3.6 8"><path d="M0.2 2.1 L2.4 0.6 V8" stroke="#333" stroke-width="1.15" fill="none"/></svg><svg class="o1" width="3.6" height="8" viewBox="0 0 3.6 8"><path d="M0.2 2.1 L2.4 0.6 V8" stroke="#333" stroke-width="1.15" fill="none"/></svg></div>
<div class="rl" style="top:33.09px"></div><div class="rn" style="top:19.32px"><svg class="o1" width="3.6" height="8" viewBox="0 0 3.6 8"><path d="M0.2 2.1 L2.4 0.6 V8" stroke="#333" stroke-width="1.15" fill="none"/></svg><svg class="o1" width="3.6" height="8" viewBox="0 0 3.6 8"><path d="M0.2 2.1 L2.4 0.6 V8" stroke="#333" stroke-width="1.15" fill="none"/></svg>2</div>
<div class="rl" style="top:49.56px"></div><div class="rn" style="top:35.79px"><svg class="o1" width="3.6" height="8" viewBox="0 0 3.6 8"><path d="M0.2 2.1 L2.4 0.6 V8" stroke="#333" stroke-width="1.15" fill="none"/></svg><svg class="o1" width="3.6" height="8" viewBox="0 0 3.6 8"><path d="M0.2 2.1 L2.4 0.6 V8" stroke="#333" stroke-width="1.15" fill="none"/></svg>3</div>
<div class="rl" style="top:66.03px"></div><div class="rn" style="top:52.26px"><svg class="o1" width="3.6" height="8" viewBox="0 0 3.6 8"><path d="M0.2 2.1 L2.4 0.6 V8" stroke="#333" stroke-width="1.15" fill="none"/></svg><svg class="o1" width="3.6" height="8" viewBox="0 0 3.6 8"><path d="M0.2 2.1 L2.4 0.6 V8" stroke="#333" stroke-width="1.15" fill="none"/></svg>4</div>
<div class="rl" style="top:82.50px"></div><div class="rn" style="top:68.73px"><svg class="o1" width="3.6" height="8" viewBox="0 0 3.6 8"><path d="M0.2 2.1 L2.4 0.6 V8" stroke="#333" stroke-width="1.15" fill="none"/></svg><svg class="o1" width="3.6" height="8" viewBox="0 0 3.6 8"><path d="M0.2 2.1 L2.4 0.6 V8" stroke="#333" stroke-width="1.15" fill="none"/></svg>5</div>
<div class="rl" style="top:98.97px"></div><div class="rn" style="top:85.20px"><svg class="o1" width="3.6" height="8" viewBox="0 0 3.6 8"><path d="M0.2 2.1 L2.4 0.6 V8" stroke="#333" stroke-width="1.15" fill="none"/></svg><svg class="o1" width="3.6" height="8" viewBox="0 0 3.6 8"><path d="M0.2 2.1 L2.4 0.6 V8" stroke="#333" stroke-width="1.15" fill="none"/></svg>6</div>
<div class="rl" style="top:115.44px"></div><div class="rn" style="top:101.67px"><svg class="o1" width="3.6" height="8" viewBox="0 0 3.6 8"><path d="M0.2 2.1 L2.4 0.6 V8" stroke="#333" stroke-width="1.15" fill="none"/></svg><svg class="o1" width="3.6" height="8" viewBox="0 0 3.6 8"><path d="M0.2 2.1 L2.4 0.6 V8" stroke="#333" stroke-width="1.15" fill="none"/></svg>7</div>
<div class="rl" style="top:131.91px"></div><div class="rn" style="top:118.14px"><svg class="o1" width="3.6" height="8" viewBox="0 0 3.6 8"><path d="M0.2 2.1 L2.4 0.6 V8" stroke="#333" stroke-width="1.15" fill="none"/></svg><svg class="o1" width="3.6" height="8" viewBox="0 0 3.6 8"><path d="M0.2 2.1 L2.4 0.6 V8" stroke="#333" stroke-width="1.15" fill="none"/></svg>8</div>
<div class="rl" style="top:148.38px"></div><div class="rn" style="top:134.61px"><svg class="o1" width="3.6" height="8" viewBox="0 0 3.6 8"><path d="M0.2 2.1 L2.4 0.6 V8" stroke="#333" stroke-width="1.15" fill="none"/></svg><svg class="o1" width="3.6" height="8" viewBox="0 0 3.6 8"><path d="M0.2 2.1 L2.4 0.6 V8" stroke="#333" stroke-width="1.15" fill="none"/></svg>9</div>
<div class="rl" style="top:164.85px"></div><div class="rn" style="top:151.08px"><svg class="o1" width="3.6" height="8" viewBox="0 0 3.6 8"><path d="M0.2 2.1 L2.4 0.6 V8" stroke="#333" stroke-width="1.15" fill="none"/></svg>20</div>
<div class="rl" style="top:181.32px"></div><div class="rn" style="top:167.55px"><svg class="o1" width="3.6" height="8" viewBox="0 0 3.6 8"><path d="M0.2 2.1 L2.4 0.6 V8" stroke="#333" stroke-width="1.15" fill="none"/></svg>2<svg class="o1" width="3.6" height="8" viewBox="0 0 3.6 8"><path d="M0.2 2.1 L2.4 0.6 V8" stroke="#333" stroke-width="1.15" fill="none"/></svg></div>
<div class="rl" style="top:197.79px"></div><div class="rn" style="top:184.02px"><svg class="o1" width="3.6" height="8" viewBox="0 0 3.6 8"><path d="M0.2 2.1 L2.4 0.6 V8" stroke="#333" stroke-width="1.15" fill="none"/></svg>22</div>
<div class="rl" style="top:214.26px"></div><div class="rn" style="top:200.49px"><svg class="o1" width="3.6" height="8" viewBox="0 0 3.6 8"><path d="M0.2 2.1 L2.4 0.6 V8" stroke="#333" stroke-width="1.15" fill="none"/></svg>23</div>
<div class="rl" style="top:230.73px"></div><div class="rn" style="top:216.96px"><svg class="o1" width="3.6" height="8" viewBox="0 0 3.6 8"><path d="M0.2 2.1 L2.4 0.6 V8" stroke="#333" stroke-width="1.15" fill="none"/></svg>24</div>
<div class="rl" style="top:247.20px"></div><div class="rn" style="top:233.43px"><svg class="o1" width="3.6" height="8" viewBox="0 0 3.6 8"><path d="M0.2 2.1 L2.4 0.6 V8" stroke="#333" stroke-width="1.15" fill="none"/></svg>25</div>
<div class="rl" style="top:263.67px"></div><div class="rn" style="top:249.90px"><svg class="o1" width="3.6" height="8" viewBox="0 0 3.6 8"><path d="M0.2 2.1 L2.4 0.6 V8" stroke="#333" stroke-width="1.15" fill="none"/></svg>26</div>
<div class="rl" style="top:280.14px"></div><div class="rn" style="top:266.37px"><svg class="o1" width="3.6" height="8" viewBox="0 0 3.6 8"><path d="M0.2 2.1 L2.4 0.6 V8" stroke="#333" stroke-width="1.15" fill="none"/></svg>27</div>
<div class="rl" style="top:296.61px"></div><div class="rn" style="top:282.84px"><svg class="o1" width="3.6" height="8" viewBox="0 0 3.6 8"><path d="M0.2 2.1 L2.4 0.6 V8" stroke="#333" stroke-width="1.15" fill="none"/></svg>28</div>
<div class="rl" style="top:313.08px"></div><div class="rn" style="top:299.31px"><svg class="o1" width="3.6" height="8" viewBox="0 0 3.6 8"><path d="M0.2 2.1 L2.4 0.6 V8" stroke="#333" stroke-width="1.15" fill="none"/></svg>29</div>
<div class="rl" style="top:329.55px"></div><div class="rn" style="top:315.78px"><svg class="o1" width="3.6" height="8" viewBox="0 0 3.6 8"><path d="M0.2 2.1 L2.4 0.6 V8" stroke="#333" stroke-width="1.15" fill="none"/></svg>30</div>
<div class="rl" style="top:346.02px"></div><div class="rn" style="top:332.25px"><svg class="o1" width="3.6" height="8" viewBox="0 0 3.6 8"><path d="M0.2 2.1 L2.4 0.6 V8" stroke="#333" stroke-width="1.15" fill="none"/></svg>3<svg class="o1" width="3.6" height="8" viewBox="0 0 3.6 8"><path d="M0.2 2.1 L2.4 0.6 V8" stroke="#333" stroke-width="1.15" fill="none"/></svg></div>
<div class="rl" style="top:362.49px"></div><div class="rn" style="top:348.72px"><svg class="o1" width="3.6" height="8" viewBox="0 0 3.6 8"><path d="M0.2 2.1 L2.4 0.6 V8" stroke="#333" stroke-width="1.15" fill="none"/></svg>32</div>
<div class="rl" style="top:378.96px"></div><div class="rn" style="top:365.19px"><svg class="o1" width="3.6" height="8" viewBox="0 0 3.6 8"><path d="M0.2 2.1 L2.4 0.6 V8" stroke="#333" stroke-width="1.15" fill="none"/></svg>33</div>
<div class="rl" style="top:395.43px"></div><div class="rn" style="top:381.66px"><svg class="o1" width="3.6" height="8" viewBox="0 0 3.6 8"><path d="M0.2 2.1 L2.4 0.6 V8" stroke="#333" stroke-width="1.15" fill="none"/></svg>34</div>
<div class="rl" style="top:411.90px"></div><div class="rn" style="top:398.13px"><svg class="o1" width="3.6" height="8" viewBox="0 0 3.6 8"><path d="M0.2 2.1 L2.4 0.6 V8" stroke="#333" stroke-width="1.15" fill="none"/></svg>35</div>
<div class="rl" style="top:428.37px"></div><div class="rn" style="top:414.60px"><svg class="o1" width="3.6" height="8" viewBox="0 0 3.6 8"><path d="M0.2 2.1 L2.4 0.6 V8" stroke="#333" stroke-width="1.15" fill="none"/></svg>36</div>
<div class="rl" style="top:444.84px"></div><div class="rn" style="top:431.07px"><svg class="o1" width="3.6" height="8" viewBox="0 0 3.6 8"><path d="M0.2 2.1 L2.4 0.6 V8" stroke="#333" stroke-width="1.15" fill="none"/></svg>37</div>
<div class="rl" style="top:461.31px"></div><div class="rn" style="top:447.54px"><svg class="o1" width="3.6" height="8" viewBox="0 0 3.6 8"><path d="M0.2 2.1 L2.4 0.6 V8" stroke="#333" stroke-width="1.15" fill="none"/></svg>38</div>
<div class="rl" style="top:477.78px"></div><div class="rn" style="top:464.01px"><svg class="o1" width="3.6" height="8" viewBox="0 0 3.6 8"><path d="M0.2 2.1 L2.4 0.6 V8" stroke="#333" stroke-width="1.15" fill="none"/></svg>39</div>
<div class="rl" style="top:494.25px"></div><div class="rn" style="top:480.48px"><svg class="o1" width="3.6" height="8" viewBox="0 0 3.6 8"><path d="M0.2 2.1 L2.4 0.6 V8" stroke="#333" stroke-width="1.15" fill="none"/></svg>40</div>
<div class="rl" style="top:510.72px"></div><div class="rn" style="top:496.95px"><svg class="o1" width="3.6" height="8" viewBox="0 0 3.6 8"><path d="M0.2 2.1 L2.4 0.6 V8" stroke="#333" stroke-width="1.15" fill="none"/></svg>4<svg class="o1" width="3.6" height="8" viewBox="0 0 3.6 8"><path d="M0.2 2.1 L2.4 0.6 V8" stroke="#333" stroke-width="1.15" fill="none"/></svg></div>
<div class="rl" style="top:527.19px"></div><div class="rn" style="top:513.42px"><svg class="o1" width="3.6" height="8" viewBox="0 0 3.6 8"><path d="M0.2 2.1 L2.4 0.6 V8" stroke="#333" stroke-width="1.15" fill="none"/></svg>42</div>
</div>
<!--BOTTOM-->
<div class="a" style="left:70.5px;top:680px;width:121px;height:17.5px;background:#fff;border-left:1px solid #c6c6c6;border-right:1px solid #c6c6c6;border-bottom:2px solid #217346"></div>
<div class="a ui" style="left:78.5px;top:683.6px;font-size:9.5px;line-height:1;font-weight:bold;color:#217346;transform:scaleX(0.92);transform-origin:0 0">Adjust Bar Chart Spacing</div>
<svg class="a" style="left:19px;top:686px" width="5" height="7"><path d="M4 0.5 L1 3.5 L4 6.5" stroke="#c4c4c4" fill="none" stroke-width="1"/></svg>
<svg class="a" style="left:39px;top:686px" width="5" height="7"><path d="M1 0.5 L4 3.5 L1 6.5" stroke="#c4c4c4" fill="none" stroke-width="1"/></svg>
<svg class="a" style="left:213.5px;top:683.5px" width="13" height="13"><circle cx="6.5" cy="6.5" r="5.6" stroke="#777" fill="none" stroke-width="1"/><path d="M6.5 3.5 V9.5 M3.5 6.5 H9.5" stroke="#666" stroke-width="1.2"/></svg>
<div class="a" style="left:792.8px;top:686px;width:1.2px;height:1.2px;background:#aaa;box-shadow:0 3px 0 #aaa,0 6px 0 #aaa"></div>
<div class="a" style="left:804.2px;top:685.5px;width:442.3px;height:9.5px;background:#fff;border:1px solid #c8c8c8"></div>
<div class="a" style="left:814px;top:685.5px;width:1px;height:9.5px;background:#c8c8c8"></div>
<svg class="a" style="left:807.5px;top:687.5px" width="4" height="6"><path d="M3.5 0 V6 L0 3 Z" fill="#444"/></svg>
<div class="a" style="left:1246.5px;top:685.5px;width:34px;height:9.5px;background:#dcdcdc"></div>
<div class="a ui" style="left:7px;top:702px;font-size:9px;line-height:1;color:#444;transform:scaleX(0.93);transform-origin:0 0">Ready</div>
<svg class="a" style="left:41px;top:702px" width="10" height="10"><circle cx="2" cy="2" r="1.8" fill="#666"/><rect x="4.5" y="1" width="5" height="2" fill="#666"/><rect x="0.5" y="4.5" width="9" height="5" fill="#fff" stroke="#888" stroke-width="1"/><path d="M3.5 4.5 V9.5 M6.5 4.5 V9.5" stroke="#888" stroke-width="0.8"/></svg>
<div class="a" style="left:1123.75px;top:700px;width:25.75px;height:13.75px;background:#c6c6c6"></div>
<svg class="a" style="left:1131.5px;top:702px" width="10" height="10"><rect x="0.5" y="0.5" width="9" height="9" fill="none" stroke="#666" stroke-width="1"/><path d="M3.5 0.5 V9.5 M6.5 0.5 V9.5 M0.5 3.5 H9.5 M0.5 6.5 H9.5" stroke="#666" stroke-width="0.9"/></svg>
<svg class="a" style="left:1158px;top:702px" width="10" height="10"><rect x="0.5" y="0.5" width="9" height="9" fill="none" stroke="#666" stroke-width="1"/><rect x="2.5" y="2" width="5" height="6" fill="none" stroke="#888" stroke-width="0.9"/></svg>
<svg class="a" style="left:1183.75px;top:702px" width="10" height="10"><rect x="0.5" y="0.5" width="9" height="9" fill="none" stroke="#666" stroke-width="1"/><path d="M3.5 0.5 V5 M6 0.5 V5 M0.5 5.5 H9.5" stroke="#666" stroke-width="0.9"/></svg>
<div class="a" style="left:1205px;top:706.3px;width:5px;height:1.4px;background:#444"></div>
<div class="a" style="left:1212px;top:706.7px;width:68px;height:1px;background:#b4b4b4"></div>
<div class="a" style="left:1245px;top:703px;width:3.5px;height:7px;background:#555"></div>
<div class="a ui" id="clocktxt" style="left:1247px;top:715px;font-size:7px;line-height:1;color:#e8e8e8;letter-spacing:0.5px">3:33 PM</div>
<!--/BOTTOM-->
<!-- title -->
<div class="a t" id="t1" style="-webkit-text-stroke:0.7px #5b2dc0;left:32.1px;top:164.85px;font-size:31px;font-weight:bold;color:#5b2dc0;transform:scaleX(1.0113)">Arlington County is Truly the</div>
<div class="a t" id="t2" style="-webkit-text-stroke:0.7px #5b2dc0;left:32.4px;top:205.5px;font-size:31px;font-weight:bold;color:#5b2dc0;transform:scaleX(1.0306)">"Land of the Twenty-Somethings"</div>
<div class="a t tx" id="sub" style="left:32.3px;top:244.7px;font-size:16.3px;transform:scaleX(1.1103)">Of its 207,607 residents, 51,076 people (25% of the population) are between 20 and 29 years old.</div>

<!-- chart -->
<div class="a t tx" id="nof" style="left:32.4px;top:288.7px;font-size:16px;transform:scaleX(1.2014)">Number of</div>
<div class="a t tx" id="res" style="left:32.4px;top:308.7px;font-size:16px;transform:scaleX(1.1479)">Residents</div>
<div class="a t tx" id="y60" style="left:32.8px;top:332.5px;font-size:17.4px;transform:scaleX(1.0817)">60,000</div>
<div class="a t tx" id="y0" style="left:80.8px;top:568px;font-size:17.4px;transform:scaleX(1.0889)">0</div>
<div class="a" style="left:105px;top:342px;width:1px;height:235px;background:#d9d9d9"></div>
<div class="a" style="left:100px;top:342px;width:6px;height:1px;background:#d9d9d9"></div>
<div class="a" style="left:100px;top:576px;width:6px;height:1px;background:#d9d9d9"></div>

<div class="bar" style="left:133px;top:495px;width:35px;height:82px"></div>
<div class="bar" style="left:222px;top:521px;width:35px;height:56px"></div>
<div class="bar" style="left:310.5px;top:377px;width:35.5px;height:200px;background:#6531c9"></div>
<div class="bar" style="left:399px;top:413.5px;width:36px;height:163.5px"></div>
<div class="bar" style="left:488px;top:465px;width:35.5px;height:112px"></div>
<div class="bar" style="left:577px;top:486px;width:35.5px;height:91px"></div>
<div class="bar" style="left:665.5px;top:516px;width:35.5px;height:61px"></div>
<div class="bar" style="left:754px;top:551px;width:36px;height:26px"></div>
<div class="bar" style="left:843px;top:558px;width:35.5px;height:19px"></div>

<div class="brk" style="left:440px;top:444px;width:42px;height:18px"></div>
<div class="brk" style="left:528.5px;top:468px;width:42px;height:18px"></div>
<div class="brk" style="left:619px;top:506px;width:42px;height:19px"></div>

<div class="a t" id="lb1" style="-webkit-text-stroke:0.35px #5b2dc0;left:302.8px;top:330.6px;font-size:16.4px;font-weight:bold;color:#5f2fc3;transform:scaleX(1.0051)">51,076</div>
<div class="a t" id="lb2" style="-webkit-text-stroke:0.35px #5b2dc0;left:287.8px;top:352.6px;font-size:16.4px;font-weight:bold;color:#5f2fc3;transform:scaleX(1.1162)">residents</div>

<div class="a t tx" id="c1" style="left:117.3px;top:589.5px;font-size:17.8px;transform:scaleX(1.0516)">Under 9</div>
<div class="a t tx" id="c1b" style="left:114px;top:609.7px;font-size:17.8px;transform:scaleX(1.01)">years old</div>
<div class="a t tx" id="c2" style="left:210px;top:589.5px;font-size:17.8px;transform:scaleX(0.9048)">10 to 19</div>
<div class="a t tx" id="c3" style="left:295px;top:589.5px;font-size:17.8px;transform:scaleX(1.0317)">20 to 29</div>
<div class="a t tx" id="c4" style="left:384px;top:589.5px;font-size:17.8px;transform:scaleX(1.0278)">30 to 39</div>
<div class="a t tx" id="c5" style="left:472px;top:589.5px;font-size:17.8px;transform:scaleX(1.0508)">40 to 49</div>
<div class="a t tx" id="c6" style="left:561.5px;top:589.5px;font-size:17.8px;transform:scaleX(1.04)">50 to 59</div>
<div class="a t tx" id="c7" style="left:649px;top:589.5px;font-size:17.8px;transform:scaleX(1.0397)">60 to 69</div>
<div class="a t tx" id="c8" style="left:737.8px;top:589.5px;font-size:17.8px;transform:scaleX(1.0437)">70 to 79</div>
<div class="a t tx" id="c9" style="left:831px;top:589.5px;font-size:17.8px;transform:scaleX(1.0708)">80 and</div>
<div class="a t tx" id="c9b" style="left:842.8px;top:609.7px;font-size:17.8px;transform:scaleX(1.0074)">over</div>
<div class="a t tx" id="ax" style="left:456.2px;top:633.2px;font-size:17.8px;transform:scaleX(1.0077)">Age Ranges</div>

<div class="a" id="ghost" style="left:912px;top:578px;width:118px;height:16px;background:#fbfcfe"></div>
<div class="a" style="left:915px;top:582.5px;width:8px;height:7px;background:#f4f5f9"></div>
<div class="a" style="left:935px;top:583px;width:45px;height:6px;background:#f4f5f9"></div>
<!-- callout -->
<div class="a" style="left:711px;top:279px;width:544px;height:257.5px;background:#f0f0f0"></div>
<div class="a t co" id="k1" style="left:721px;top:283px;transform:scaleX(1.0265)">Why are the bars so far apart?!</div>
<div class="a t co" id="k2" style="left:719.5px;top:318px;transform:scaleX(1.0168)">By default, Excel spaces the bars</div>
<div class="a t co" id="k3" style="left:720.5px;top:353px;transform:scaleX(1.0334)">150% apart from each other.</div>
<div class="a t co" id="k5" style="left:719.5px;top:423px;transform:scaleX(1.0242)">If each bar is 1 centimeter wide,</div>
<div class="a t co" id="k6" style="left:721.5px;top:458px;transform:scaleX(1.0405)">then the space between the bars</div>
<div class="a t co" id="k7" style="left:722.5px;top:493px;transform:scaleX(1.006)">will be 1.5 centimeters wide.</div>

</div></body></html>
